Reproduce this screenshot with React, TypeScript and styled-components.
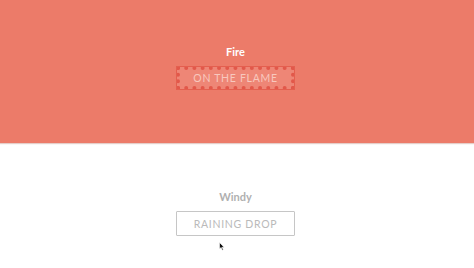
import React from "react";
import styled, { createGlobalStyle } from "styled-components";

const GlobalStyle = createGlobalStyle`
  html, body {
    margin: 0;
    padding: 0;
    background: #fff;
    font-family: Lato, "Open Sans", sans-serif;
  }
`;

const Page = styled.div`
  width: 474px;
  height: 268px;
  display: flex;
  flex-direction: column;
  position: relative;
  overflow: hidden;
`;

const Section = styled.section<{ $fire?: boolean }>`
  height: ${(p) => (p.$fire ? "143px" : "125px")};
  padding: ${(p) => (p.$fire ? "45px" : "47px")} 3px 0 0;
  box-sizing: border-box;
  background: ${(p) => (p.$fire ? "#ec7b69" : "#fff")};
  box-shadow: ${(p) => (p.$fire ? "0 1px 1px rgba(150, 60, 40, 0.25)" : "none")};
  display: flex;
  flex-direction: column;
  align-items: center;
  gap: 7px;
  position: relative;
  z-index: ${(p) => (p.$fire ? 1 : 0)};
`;

const Title = styled.h2<{ $fire?: boolean }>`
  margin: 0;
  font-size: 11px;
  line-height: 14px;
  font-weight: 700;
  color: ${(p) => (p.$fire ? "#fff" : "#b0b0b0")};
`;

const FireButton = styled.button`
  width: 119px;
  height: 24px;
  box-sizing: border-box;
  border: 4px dotted #e2584a;
  outline: 1.5px solid #e45f4f;
  outline-offset: -1.5px;
  background: #ee8676;
  color: #f8c8be;
  font-family: inherit;
  font-size: 10.5px;
  letter-spacing: 0.7px;
  padding: 0;
`;

const WindyButton = styled.button`
  width: 119px;
  height: 25px;
  box-sizing: border-box;
  border: 1px solid #c6c6c6;
  border-radius: 1px;
  background: #fff;
  color: #bababa;
  font-family: inherit;
  font-size: 10.5px;
  letter-spacing: 0.7px;
  padding: 0;
`;

const Cursor = styled.svg`
  position: absolute;
  left: 219px;
  top: 242px;
`;

export default function App() {
  return (
    <>
      <GlobalStyle />
      <Page>
        <Section $fire>
          <Title $fire>Fire</Title>
          <FireButton>ON THE FLAME</FireButton>
        </Section>
        <Section>
          <Title>Windy</Title>
          <WindyButton>RAINING DROP</WindyButton>
        </Section>
        <Cursor width="6" height="9" viewBox="0 0 6 9">
          <path d="M0.5 0.5 L0.5 7 L2 5.5 L3.3 8.3 L4.3 7.8 L3.1 5.2 L5.2 5.2 Z" fill="#111" stroke="#fff" strokeWidth="0.6" />
        </Cursor>
      </Page>
    </>
  );
}
